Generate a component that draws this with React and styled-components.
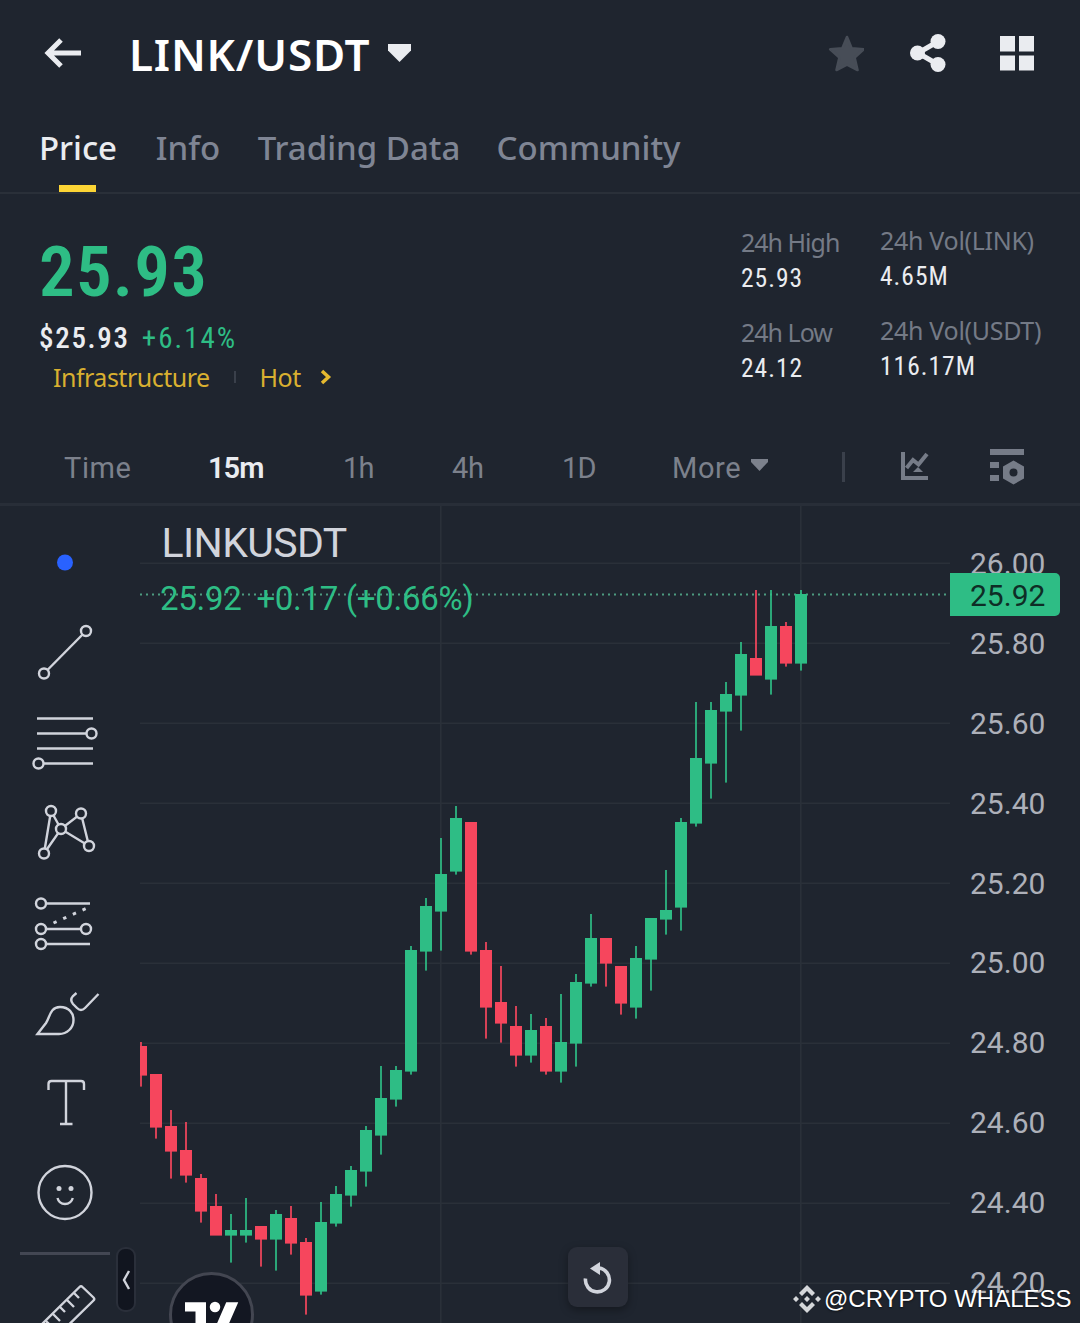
import React from 'react'
import styled, { createGlobalStyle } from 'styled-components'

const GREEN = '#2ebd85'
const RED = '#f6465d'
const LINE = '#2a3039'

const GlobalStyle = createGlobalStyle`
  *{
    box-sizing: border-box;
  }
  body{
    margin: 0;
    background-color: #1f252f;
    font-family: Roboto, 'Liberation Sans', sans-serif;
  }
  svg{
    display: block;
    flex: none;
  }
`

const Screen = styled.main`
  display: flex;
  flex-direction: column;
  width: 1080px;
  height: 1323px;
  overflow: hidden;
  background-color: #1f252f;
  color: #eaecf0;
  white-space: nowrap;
`

const TopBar = styled.header`
  display: flex;
  align-items: center;
  height: 106px;
  padding: 0 46px 0 44px;
`

const PairName = styled.h1`
  width: 259px;
  margin: 1px 0 0 47px;
  font-family: 'Noto Sans', sans-serif;
  font-size: 44px;
  font-weight: 600;
  line-height: 60px;
  letter-spacing: 0.8px;
  color: #fff;
`

const Actions = styled.div`
  display: flex;
  align-items: center;
  gap: 43px;
  margin-left: auto;
`

const Tabs = styled.nav`
  display: flex;
  height: 88px;
  padding-left: 38px;
  border-bottom: 2px solid ${LINE};
`

const Tab = styled.a`
  display: flex;
  flex-direction: column;
  align-items: center;
  width: ${p => p.$width}px;
  margin-right: 37px;
  padding-top: 20px;
  font-family: 'Noto Sans', sans-serif;
  font-size: 33px;
  font-weight: 500;
  line-height: 44px;
  color: ${p => (p.$active ? '#eaecf0' : '#7f8594')};
  &::after{
    content: '';
    width: 37px;
    height: 7px;
    margin: 15px 2px 0 0;
    background-color: ${p => (p.$active ? '#fcd535' : 'transparent')};
  }
`

const Quote = styled.section`
  display: flex;
  height: 236px;
`

const LastPrice = styled.div`
  width: 741px;
  padding: 36px 0 0 39px;
`

const Price = styled.div`
  font-size: 71px;
  font-weight: 600;
  font-stretch: 85%;
  line-height: 84px;
  letter-spacing: 1.2px;
  color: ${GREEN};
`

const Change = styled.div`
  display: flex;
  gap: 12px;
  height: 48px;
  font-size: 29px;
  font-weight: 500;
  font-stretch: 85%;
  line-height: 48px;
  letter-spacing: 1.7px;
  span{
    font-weight: 400;
    letter-spacing: 2px;
    color: ${GREEN};
  }
`

const Tags = styled.div`
  display: flex;
  align-items: center;
  height: 30px;
  padding-left: 14px;
  font-family: 'Noto Sans', sans-serif;
  font-size: 25px;
  letter-spacing: -0.5px;
  color: #d9b030;
  i{
    width: 2px;
    height: 12px;
    margin: 0 24px;
    background-color: #3a404b;
  }
  svg{
    margin-left: 19px;
  }
`

const Stats = styled.dl`
  width: ${p => p.$width}px;
  margin: 0;
  padding-top: ${p => p.$top}px;
  font-size: 25.5px;
  line-height: 35px;
  dt{
    margin-top: -1px;
    padding-bottom: 1px;
    font-family: 'Noto Sans', sans-serif;
    font-size: 25px;
    letter-spacing: ${p => p.$track}px;
    color: #747a86;
  }
  dd{
    margin: 0 0 20px;
    font-stretch: 85%;
    letter-spacing: 1px;
  }
`

const Intervals = styled.nav`
  display: flex;
  align-items: center;
  height: 76px;
  padding: 2px 0 0 64px;
  border-bottom: 3px solid #282e38;
  & > svg{
    margin-bottom: 2px;
  }
`

const Interval = styled.a`
  display: flex;
  align-items: center;
  width: ${p => p.$width}px;
  font-size: 29px;
  font-weight: ${p => (p.$active ? 600 : 400)};
  letter-spacing: ${p => p.$track || 0}px;
  color: ${p => (p.$active ? '#eaecf0' : '#7c818c')};
  svg{
    margin: -4px 0 0 10px;
  }
`

const Separator = styled.i`
  width: 3px;
  height: 30px;
  margin: -2px 56px 0 0;
  background-color: #3a404b;
`

const ChartArea = styled.section`
  position: relative;
  display: flex;
  height: 817px;
`

const Tools = styled.aside`
  display: flex;
  flex-direction: column;
  width: 140px;
  padding: 11px 0 0 20px;
`

const ToolDivider = styled.hr`
  flex: none;
  width: 90px;
  height: 3px;
  margin: 15px 0 0;
  border: 0;
  background-color: #434753;
`

const Axis = styled.div`
  width: 130px;
  padding: 18px 0 0 20px;
  font-size: 30px;
  line-height: 80px;
  color: #adb0b9;
  div{
    height: 79.9px;
  }
`

const PriceTag = styled.div`
  position: absolute;
  top: 67px;
  left: 950px;
  width: 110px;
  height: 43px;
  padding-left: 20px;
  border-radius: 0 5px 5px 0;
  background-color: ${GREEN};
  font-size: 30px;
  line-height: 46px;
  color: #0e2d26;
`

const Legend = styled.div`
  position: absolute;
  top: 13px;
  left: 160px;
  font-size: 41px;
  line-height: 48px;
  letter-spacing: -0.6px;
  text-indent: 1.5px;
  color: #d1d4dc;
`

const LegendValues = styled.div`
  display: flex;
  gap: 15px;
  font-size: 33px;
  line-height: 63px;
  letter-spacing: -0.3px;
  text-indent: 0;
  color: ${GREEN};
`

const CollapseHandle = styled.button`
  position: absolute;
  top: 741px;
  left: 116px;
  display: flex;
  align-items: center;
  justify-content: center;
  width: 20px;
  height: 65px;
  padding: 0;
  border: 2px solid #2a2f3a;
  border-radius: 9px;
  background-color: #11151f;
`

const ChartLogo = styled.div`
  position: absolute;
  top: 766px;
  left: 169px;
  width: 85px;
  height: 85px;
  padding: 20px 0 0 13px;
  border: 3px solid #434651;
  border-radius: 50%;
  background-color: #131722;
`

const ResetButton = styled.button`
  position: absolute;
  top: 741px;
  left: 568px;
  width: 60px;
  height: 60px;
  padding: 0;
  border: 0;
  border-radius: 9px;
  background-color: #2a2e39;
  box-shadow: 0 3px 8px rgba(0, 0, 0, 0.35);
`

const Watermark = styled.div`
  position: absolute;
  top: 778px;
  left: 793px;
  display: flex;
  align-items: center;
  gap: 3px;
  height: 30px;
  font-family: 'Liberation Sans', sans-serif;
  font-size: 24px;
  color: #fff;
  text-shadow: 0 1px 2px rgba(0, 0, 0, 0.6);
`

// open, high, low, close in cents
const candles = [
  [2479, 2480, 2469, 2472], [2472, 2472, 2456, 2459], [2459, 2463, 2446, 2453],
  [2453, 2460, 2445, 2447], [2446, 2447, 2435, 2438], [2439, 2442, 2432, 2432],
  [2432, 2437, 2425, 2433], [2432, 2441, 2430, 2433], [2434, 2434, 2424, 2431],
  [2431, 2438, 2423, 2437], [2436, 2439, 2427, 2430], [2430, 2431, 2412, 2417],
  [2418, 2440, 2417, 2435], [2435, 2444, 2434, 2442], [2442, 2449, 2439, 2448],
  [2448, 2459, 2444, 2458], [2457, 2474, 2452, 2466], [2466, 2474, 2464, 2473],
  [2473, 2504, 2472, 2503], [2503, 2516, 2498, 2514], [2513, 2531, 2503, 2522],
  [2523, 2539, 2522, 2536], [2535, 2535, 2502, 2503], [2503, 2505, 2481, 2489],
  [2490, 2499, 2480, 2485], [2484, 2489, 2474, 2477], [2477, 2487, 2475, 2483],
  [2484, 2486, 2472, 2473], [2473, 2492, 2470, 2480], [2480, 2497, 2474, 2495],
  [2495, 2512, 2494, 2506], [2506, 2506, 2494, 2500], [2499, 2499, 2487, 2490],
  [2489, 2504, 2486, 2501], [2501, 2511, 2493, 2511], [2511, 2523, 2507, 2513],
  [2514, 2536, 2508, 2535], [2535, 2565, 2534, 2551], [2550, 2565, 2541, 2563],
  [2563, 2570, 2545, 2567], [2567, 2580, 2558, 2577], [2576, 2593, 2572, 2572],
  [2571, 2593, 2567, 2584], [2584, 2585, 2574, 2575], [2575, 2593, 2573, 2592],
]

const ticks = [2600, 2580, 2560, 2540, 2520, 2500, 2480, 2460, 2440, 2420]

const toY = cents => 57 + (2600 - cents) * 4

const Candle = ({ index, data }) => {
  const [open, high, low, close] = data
  const x = 1 + index * 15
  const top = toY(Math.max(open, close)) - 1
  const bottom = toY(Math.min(open, close)) + 0.6
  return (
    <g fill={close > open ? GREEN : RED}>
      <rect x={x - 1} y={toY(high) - 1} width="2" height={(high - low) * 4 + 0.6} opacity="0.85" />
      <rect x={x - 6} y={top} width="12" height={bottom - top} />
    </g>
  )
}

const CandleChart = () => (
  <svg width="810" height="817">
    <g fill={LINE}>
      {ticks.map(t => <rect key={t} x="0" y={toY(t) - 0.5} width="810" height="1.5" />)}
      <rect x="300" y="0" width="1.6" height="817" />
      <rect x="660" y="0" width="1.6" height="817" />
    </g>
    <path d="M0 88.5H810" stroke="#4d9b80" strokeWidth="2" strokeDasharray="2 4" />
    {candles.map((c, i) => <Candle key={i} index={i} data={c} />)}
  </svg>
)

const Tool = ({ children }) => (
  <svg width="90" height="90" viewBox="0 0 90 90" fill="none" stroke="#d1d4dc" strokeWidth="2.4">
    {children}
  </svg>
)

const Rings = ({ at }) => at.map(([x, y]) => (
  <circle key={`${x}-${y}`} cx={x} cy={y} r="5" fill="#1f252f" />
))

const Toolbox = () => (
  <Tools>
    <Tool><circle cx="45" cy="45.5" r="8" fill="#2962ff" stroke="none" /></Tool>
    <Tool>
      <path d="M24 66.5L66 24" />
      <Rings at={[[24, 66.5], [66, 24]]} />
    </Tool>
    <Tool>
      <path d="M17 21.5H73M17 36.5H71M17 51.5H73M19 66.5H73" />
      <Rings at={[[71.5, 36.5], [18.5, 66.5]]} />
    </Tool>
    <Tool>
      <path d="M24 66.5L31 24L41 42L61 26.5L69 59L41 42Z" />
      <Rings at={[[31, 24], [61, 26.5], [41, 42], [24, 66.5], [69, 59]]} />
    </Tool>
    <Tool>
      <path d="M21 26.5H70M21 52H66M21 67H70" />
      <path d="M33.5 46L66 31.5" strokeWidth="3" strokeDasharray="3.4 7.2" />
      <Rings at={[[21, 26.5], [21, 52], [66, 52], [21, 67]]} />
    </Tool>
    <Tool>
      <path d="M17.5 67L26 56C30 50 30 40 40 40C49 40 53.5 46 53.5 53C53.5 61 47 67 39 67Z" />
      <path d="M56.5 26L53 29Q49.5 33 53 37L57 41Q61 45 65 41L78.5 27" />
    </Tool>
    <Tool><path d="M28.5 33V27Q28.5 24 31.5 24H61Q64 24 64 27V33M46 24V67M40 67H52.5" /></Tool>
    <Tool>
      <circle cx="45" cy="45.5" r="26.5" />
      <circle cx="39" cy="41.5" r="2.5" fill="#d1d4dc" stroke="none" />
      <circle cx="51" cy="41.5" r="2.5" fill="#d1d4dc" stroke="none" />
      <path d="M37.5 51Q39 57 45 57Q51 57 52.8 51" />
    </Tool>
    <ToolDivider />
    <Tool>
      <path d="M59.5 32Q61 30.5 62.5 32L73.5 42.5Q75 44 73.5 45.5L26 92L12 79Z" />
      <path d="M54 38L59 43M47 45L54 52M40 52L45 57M33 59L40 66M26 66L31 71" />
    </Tool>
  </Tools>
)

const Header = () => (
  <TopBar>
    <svg width="38" height="32" viewBox="0 0 38 32" fill="none" stroke="#eaecf0" strokeWidth="5">
      <path d="M37 16H4M17 3L4 16L17 29" />
    </svg>
    <PairName>LINK/USDT</PairName>
    <svg width="24" height="18" fill="#eaecf0">
      <path d="M0 0H23V6.5L11.5 18L0 6.5Z" />
    </svg>
    <Actions>
      <svg width="38" height="39" viewBox="-2 0 38 39">
        <path
          d="M19 3L23.6 14.2L35.8 15.3L26.6 23.6L29.5 36L19 30.5L8.5 36L11.4 23.6L2.2 15.3L14.4 14.2Z"
          fill="#474d57" stroke="#474d57" strokeWidth="2.6" strokeLinejoin="round"
        />
      </svg>
      <svg width="40" height="40" viewBox="-2 0 40 40" fill="#eaecf0">
        <path d="M29 8.5L9 20L29 31.5" fill="none" stroke="#eaecf0" strokeWidth="5" />
        <circle cx="8.5" cy="20" r="7.5" />
        <circle cx="29" cy="8.5" r="7.5" />
        <circle cx="29" cy="31.5" r="7.5" />
      </svg>
      <svg width="44" height="35" viewBox="-10 0 44 35" fill="#eaecf0">
        <path d="M0 0H15V15.5H0ZM19 0H34V15.5H19ZM0 19.5H15V34.5H0ZM19 19.5H34V34.5H19Z" />
      </svg>
    </Actions>
  </TopBar>
)

const App = () => (
  <>
    <GlobalStyle />
    <Screen>
      <Header />
      <Tabs>
        <Tab $active $width={80}>Price</Tab>
        <Tab $width={66}>Info</Tab>
        <Tab $width={202}>Trading Data</Tab>
        <Tab $width={183}>Community</Tab>
      </Tabs>
      <Quote>
        <LastPrice>
          <Price>25.93</Price>
          <Change>$25.93<span>+6.14%</span></Change>
          <Tags>
            Infrastructure<i />Hot
            <svg width="12" height="16" fill="none" stroke="#e5b92f" strokeWidth="3.5">
              <path d="M2 2L8.5 8L2 14" />
            </svg>
          </Tags>
        </LastPrice>
        <Stats $width={139} $top={32} $track={-1}>
          <dt>24h High</dt>
          <dd>25.93</dd>
          <dt>24h Low</dt>
          <dd>24.12</dd>
        </Stats>
        <Stats $width={200} $top={30} $track={-0.3}>
          <dt>24h Vol(LINK)</dt>
          <dd>4.65M</dd>
          <dt>24h Vol(USDT)</dt>
          <dd>116.17M</dd>
        </Stats>
      </Quote>
      <Intervals>
        <Interval $width={144} $track={0.6}>Time</Interval>
        <Interval $active $width={135} $track={-1}>15m</Interval>
        <Interval $width={109} $track={-0.8}>1h</Interval>
        <Interval $width={110} $track={-0.4}>4h</Interval>
        <Interval $width={110} $track={-0.8}>1D</Interval>
        <Interval $width={170} $track={0.6}>
          More
          <svg width="17" height="13" fill="#7c818c">
            <path d="M0 0H17V3L8.5 12L0 3Z" />
          </svg>
        </Interval>
        <Separator />
        <svg width="89" height="36" viewBox="0 0 89 36" fill="none" stroke="#767c88" strokeWidth="4">
          <path d="M2 3V29H27M5.5 19L12 11L17.5 15.5L26 5" />
          <path d="M17 18L22 23H12Z" fill="#767c88" stroke="none" />
        </svg>
        <svg width="36" height="38" viewBox="0 0 36 38" fill="#767c88">
          <path d="M0 1H34V7H0ZM0 14H9V20H0ZM0 27H9V33H0Z" />
          <path d="M23.5 12.5L34 18.5V30.5L23.5 36.5L13 30.5V18.5Z" />
          <circle cx="23.5" cy="24.5" r="4" fill="#1f252f" />
        </svg>
      </Intervals>
      <ChartArea>
        <Toolbox />
        <CandleChart />
        <Axis>
          {ticks.map(t => <div key={t}>{(t / 100).toFixed(2)}</div>)}
        </Axis>
        <Legend>
          LINKUSDT
          <LegendValues>
            <span>25.92</span>
            <span>+0.17 (+0.66%)</span>
          </LegendValues>
        </Legend>
        <PriceTag>25.92</PriceTag>
        <CollapseHandle>
          <svg width="10" height="20" fill="none" stroke="#d1d4dc" strokeWidth="2.4">
            <path d="M8 1L3 10L8 19" />
          </svg>
        </CollapseHandle>
        <ChartLogo>
          <svg width="54" height="42" viewBox="0 0 36 28" fill="#fff">
            <path d="M14 22H7V11H0V4.8h14v18zM28 22h-8l7.5-17.2h8L28 22z" />
            <circle cx="20" cy="8" r="3.5" />
          </svg>
        </ChartLogo>
        <ResetButton>
          <svg width="60" height="60">
            <path d="M17.5 31.5A12 12 0 1 0 31 21" fill="none" stroke="#d1d4dc" strokeWidth="3.6" />
            <path d="M22 21.5L32 15V28Z" fill="#d1d4dc" />
          </svg>
        </ResetButton>
        <Watermark>
          <svg width="28" height="28" viewBox="0 0 28 28" fill="#d5d7da">
            <path d="M14 0L22 8L19 11L14 6L9 11L6 8Z" />
            <path d="M14 28L6 20L9 17L14 22L19 17L22 20Z" />
            <path d="M3 11L6 14L3 17L0 14ZM14 11L17 14L14 17L11 14ZM25 11L28 14L25 17L22 14Z" />
          </svg>
          @CRYPTO WHALESS
        </Watermark>
      </ChartArea>
    </Screen>
  </>
)

export default App
